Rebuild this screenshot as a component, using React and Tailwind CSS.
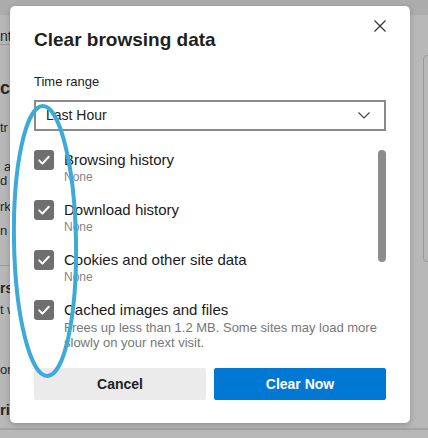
import React from 'react';

const items = [
  { label: 'Browsing history', detail: 'None' },
  { label: 'Download history', detail: 'None' },
  { label: 'Cookies and other site data', detail: 'None' },
  {
    label: 'Cached images and files',
    detail: (
      <>
        Frees up less than 1.2 MB. Some sites may load more
        <br />
        slowly on your next visit.
      </>
    ),
  },
];

// what peeks out of the settings page left of the dialog
const upperBits = [
  { text: 'c', cls: 'mt-[33px] h-[20px] text-[18px] leading-[20px] font-bold' },
  { text: 'tr', cls: 'mt-[22px] h-[16px] text-[13px] leading-[16px] text-[#3a3a3a]' },
  { text: 'a', cls: 'mt-[24px] h-[14px] text-[13px] leading-[14px] text-[#3a3a3a] pl-[4px]' },
  { text: 'd', cls: 'h-[14px] text-[13px] leading-[14px] text-[#3a3a3a]' },
  { text: 'rk', cls: 'mt-[12px] h-[14px] text-[13px] leading-[14px] text-[#3a3a3a]' },
  { text: 'n', cls: 'mt-[10px] h-[14px] text-[13px] leading-[14px] text-[#3a3a3a]' },
];

const lowerBits = [
  { text: 'rs', cls: 'mt-[14px] h-[16px] text-[14px] leading-[16px] font-bold' },
  { text: 't w', cls: 'mt-[6px] h-[16px] text-[13px] leading-[16px] text-[#3a3a3a]' },
  { text: 'or', cls: 'mt-[44px] h-[16px] text-[13px] leading-[16px] text-[#3a3a3a]' },
  { text: 'ri', cls: 'mt-[24px] h-[16px] text-[15px] leading-[16px] font-bold' },
];

function Bit({ text, cls }) {
  return <div className={`whitespace-nowrap text-[#262626] ${cls}`}>{text}</div>;
}

function Check() {
  return (
    <div className="w-[20px] h-[20px] shrink-0 rounded-[3px] bg-[#6f6f6f] flex items-center justify-center">
      <svg width="20" height="20" viewBox="0 0 20 20" fill="none">
        <path d="M5.2 10.4 L8.4 13.6 L14.8 6.8" stroke="#fff" strokeWidth="2" strokeLinecap="round" strokeLinejoin="round" />
      </svg>
    </div>
  );
}

export default function App() {
  return (
    <div className="relative w-[428px] h-[438px] overflow-hidden bg-[#b8b8b8] font-['Liberation_Sans',Arial,sans-serif]">
      {/* dimmed page behind */}
      <div className="h-[15px] bg-[#acacac]" />
      <div className="flex h-[413px]">
        <div className="w-[16px] shrink-0 flex flex-col">
          <div className="h-[30px] border-b border-[#9c9c9c] flex flex-col justify-end">
            <Bit text="nt" cls="h-[16px] text-[14px] leading-[16px]" />
          </div>
          {upperBits.map((b, i) => (
            <Bit key={i} text={b.text} cls={b.cls} />
          ))}
          <div className="mt-[27px] border-b border-[#9c9c9c]" />
          {lowerBits.map((b, i) => (
            <Bit key={i} text={b.text} cls={b.cls} />
          ))}
        </div>
        <div className="flex-1" />
        <div className="w-[5px] shrink-0 overflow-hidden pt-[40px]">
          <div className="w-[30px] h-[207px] border border-[#9a9a9a] rounded-[4px]" />
        </div>
      </div>
      <div className="border-t-2 border-[#a4a4a4]" />

      {/* dialog */}
      <div className="absolute left-[10px] top-[6px] w-[400px] h-[417px] bg-white rounded-[5px] shadow-[0_2px_6px_rgba(0,0,0,0.22)] pt-[22px] px-6 flex flex-col">
        <div className="flex items-start justify-between">
          <h1 className="h-[24px] text-[19px] leading-[24px] font-bold text-[#1f1f1f]">Clear browsing data</h1>
          <button className="-mt-[10px] -mr-[2px] w-[16px] h-[16px] flex items-center justify-center">
            <svg width="12" height="12" viewBox="0 0 12 12">
              <path d="M0.5 0.5 L11.5 11.5 M11.5 0.5 L0.5 11.5" stroke="#333" strokeWidth="1.2" />
            </svg>
          </button>
        </div>

        <div className="mt-[22px] h-[16px] text-[13px] leading-[16px] text-[#222]">Time range</div>

        <div className="mt-[10px] h-[31px] border-2 border-[#8a8a8a] flex items-center justify-between pl-[10px] pr-[14px]">
          <span className="text-[14px] text-[#222]">Last Hour</span>
          <svg width="12" height="7" viewBox="0 0 12 7" fill="none">
            <path d="M0.5 0.5 L6 6 L11.5 0.5" stroke="#444" strokeWidth="1.2" />
          </svg>
        </div>

        <div className="mt-[19px] flex">
          <div className="flex-1 flex flex-col gap-[16px]">
            {items.map((it) => (
              <div key={it.label} className="flex gap-[10px]">
                <Check />
                <div className="flex flex-col">
                  <span className="text-[15px] leading-[20px] text-[#1a1a1a]">{it.label}</span>
                  {typeof it.detail === 'string' ? (
                    <span className="text-[12px] leading-[14px] text-[#858585]">{it.detail}</span>
                  ) : (
                    <span className="text-[13px] leading-[15px] text-[#777]">{it.detail}</span>
                  )}
                </div>
              </div>
            ))}
          </div>
          <div className="w-[8px] h-[112px] rounded-full bg-[#8c8c8c]" />
        </div>

        <div className="mt-[18px] flex gap-[8px]">
          <button className="flex-1 h-[32px] rounded-[2px] bg-[#ebebeb] text-[14px] font-bold text-[#222]">Cancel</button>
          <button className="flex-1 h-[32px] rounded-[2px] bg-[#0078d4] text-[14px] font-bold text-white">Clear Now</button>
        </div>
      </div>

      {/* hand-drawn annotation */}
      <svg className="absolute left-0 top-0 pointer-events-none" width="428" height="438" viewBox="0 0 428 438">
        <ellipse cx="45" cy="241" rx="31" ry="135" fill="none" stroke="#3eaad8" strokeWidth="4" transform="rotate(-1 45 241)" />
      </svg>
    </div>
  );
}
